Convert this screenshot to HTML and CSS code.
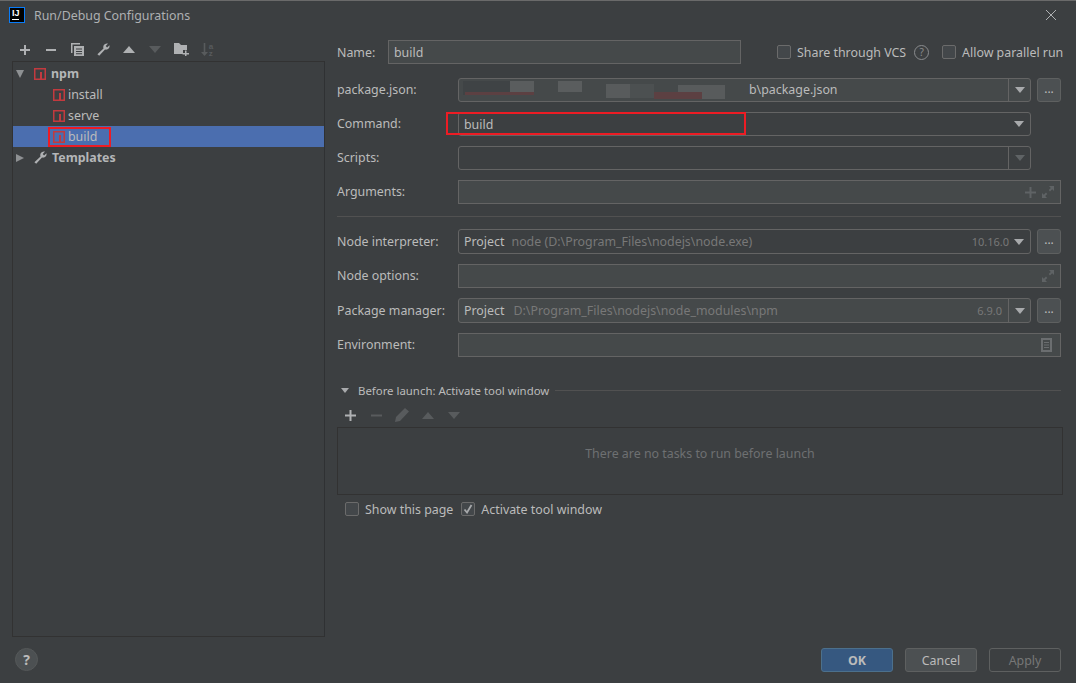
FILE: index.html
```html
<!DOCTYPE html>
<html lang="en">
<head>
<meta charset="utf-8">
<title>Run/Debug Configurations</title>
<link rel="stylesheet" href="styles.css">
</head>
<body>
<div class="dialog">
  <svg width="0" height="0" class="defs">
    <symbol id="npm" viewBox="0 0 12 12"><rect x=".75" y=".75" width="10.500" height="10.500" fill="none" stroke="#c23a3f" stroke-width="1.500"/><path d="M6 4H8V11.500H6z" fill="#c23a3f"/></symbol>
    <symbol id="wrench" viewBox="0 0 16 16"><path d="M1.500 13 8 6.800C7.200 4.200 8.800 1.600 11.600 1.500L12.800 1.700 10.400 4.200 11.800 5.800 14.400 3.400C15 6.200 12.400 8.800 9.600 8L3.400 14.600Z" fill="#afb1b3"/></symbol>
    <symbol id="expand" viewBox="0 0 14 14"><path d="M8 1H13V6L11.200 4.300 9 6.400 7.700 5.100 9.800 2.900ZM6 13H1V8L2.800 9.700 5 7.600 6.300 8.900 4.200 11.100Z" fill="#5f6365"/></symbol>
  </svg>

  <header class="titlebar">
    <span class="app-icon"><span class="app-letters">IJ</span><span class="app-bar"></span></span>
    <span class="title">Run/Debug Configurations</span>
    <svg class="close" width="12" height="12" viewBox="0 0 12 12"><path d="M1 1 11 11M11 1 1 11" stroke="#afb1b3" fill="none"/></svg>
  </header>

  <div class="main">
    <aside class="side">
      <div class="side-tools">
        <svg width="12" height="12" viewBox="0 0 12 12"><path d="M5 1h2v4h4v2H7v4H5V7H1V5h4z" fill="#afb1b3"/></svg>
        <svg width="12" height="12" viewBox="0 0 12 12"><path d="M1 5h10v2H1z" fill="#afb1b3"/></svg>
        <svg width="13" height="13" viewBox="0 0 13 13"><path d="M0 0h9v1.500H1.500V10H0z" fill="#afb1b3"/><path d="M3 3h10v10H3z" fill="#afb1b3"/><path d="M5 5.500h6v1H5zM5 8h6v1H5zM5 10.300h6v1H5z" fill="#3c3f41"/></svg>
        <svg width="15" height="15"><use href="#wrench"/></svg>
        <svg width="12" height="7" viewBox="0 0 12 7"><path d="M6 0 12 7H0z" fill="#afb1b3"/></svg>
        <svg width="12" height="7" viewBox="0 0 12 7"><path d="M0 0H12L6 7z" fill="#585b5d"/></svg>
        <svg width="15" height="13" viewBox="0 0 15 13"><path d="M0 0h5l2 2h6v5H9v4H0z" fill="#afb1b3"/><path d="M11 7.500h1.500v2.500H15v1.500h-2.500V14H11v-2.500H8.500V10H11z" fill="#afb1b3"/></svg>
        <span class="t-sort"><svg width="7" height="13" viewBox="0 0 7 13"><path d="M2.700 0h1.600v9H7l-3.500 4L0 9h2.700z" fill="#585b5d"/></svg><span class="sort-letters">a<br>z</span></span>
      </div>
      <div class="tree">
        <div class="node">
          <span class="arrow-down"></span>
          <svg class="ico" width="12" height="12"><use href="#npm"/></svg>
          <b class="node-bold">npm</b>
        </div>
        <div class="node child"><svg class="ico" width="12" height="12"><use href="#npm"/></svg><span>install</span></div>
        <div class="node child"><svg class="ico" width="12" height="12"><use href="#npm"/></svg><span>serve</span></div>
        <div class="node child selected"><svg class="ico" width="12" height="12"><use href="#npm"/></svg><span>build</span><span class="mark mark-tree"></span></div>
        <div class="node">
          <span class="arrow-right"></span>
          <svg class="ico-w" width="15" height="15"><use href="#wrench"/></svg>
          <b class="node-bold">Templates</b>
        </div>
      </div>
    </aside>

    <section class="form">
      <div class="name-row">
        <label class="name-label">Name:</label>
        <div class="field filled name-field">build</div>
        <span class="check share"></span><span class="opt">Share through VCS</span>
        <span class="help-small">?</span>
        <span class="check parallel"></span><span class="opt">Allow parallel run</span>
      </div>

      <div class="row first">
        <label>package.json:</label>
        <div class="with-btn">
          <div class="field filled round combo">
            <span class="blur">
              <i class="b b1"></i><i class="b b2"></i><i class="b b3"></i><i class="b b4"></i><i class="b b5"></i><i class="b b6"></i><i class="b b7"></i><i class="b b8"></i>
            </span>
            <span class="pkg-path">b\package.json</span>
            <span class="drop sep"><i class="tri"></i></span>
          </div>
          <button class="dots">...</button>
        </div>
      </div>

      <div class="row">
        <label>Command:</label>
        <div class="with-btn">
          <div class="field round combo cmd">
            <span class="val">build</span>
            <span class="drop"><i class="tri"></i></span>
            <span class="mark mark-cmd"></span>
          </div>
          <span class="btn-space"></span>
        </div>
      </div>

      <div class="row">
        <label>Scripts:</label>
        <div class="with-btn">
          <div class="field round combo">
            <span class="val"></span>
            <span class="drop sep"><i class="tri dim"></i></span>
          </div>
          <span class="btn-space"></span>
        </div>
      </div>

      <div class="row">
        <label>Arguments:</label>
        <div class="field filled end">
          <svg class="plus-dim" width="11" height="11" viewBox="0 0 11 11"><path d="M4.500 0h2v4.500H11v2H6.500V11h-2V6.500H0v-2h4.500z" fill="#5f6365"/></svg>
          <svg width="14" height="14"><use href="#expand"/></svg>
        </div>
      </div>

      <hr class="rule">

      <div class="row tall">
        <label>Node interpreter:</label>
        <div class="with-btn">
          <div class="field round combo">
            <span class="val strong">Project</span><span class="path p1">node (D:\Program_Files\nodejs\node.exe)</span>
            <span class="ver v1">10.16.0</span>
            <span class="drop"><i class="tri"></i></span>
          </div>
          <button class="dots">...</button>
        </div>
      </div>

      <div class="row">
        <label>Node options:</label>
        <div class="field filled end">
          <svg width="14" height="14"><use href="#expand"/></svg>
        </div>
      </div>

      <div class="row tall">
        <label>Package manager:</label>
        <div class="with-btn">
          <div class="field filled round combo">
            <span class="val strong">Project</span><span class="path p2">D:\Program_Files\nodejs\node_modules\npm</span>
            <span class="ver v2">6.9.0</span>
            <span class="drop sep"><i class="tri"></i></span>
          </div>
          <button class="dots">...</button>
        </div>
      </div>

      <div class="row">
        <label>Environment:</label>
        <div class="field filled end">
          <svg class="doc" width="11" height="14" viewBox="0 0 11 14"><path d="M0 0h11v14H0z" fill="#6b6e70"/><path d="M2 2h7v10H2z" fill="#45494a"/><path d="M3 4h5v1H3zM3 6.500h5v1H3zM3 9h5v1H3z" fill="#6b6e70"/></svg>
        </div>
      </div>

      <div class="before">
        <i class="tri before-tri"></i>
        <span class="before-title">Before launch: Activate tool window</span>
        <span class="before-line"></span>
      </div>
      <div class="before-tools">
        <svg width="11" height="11" viewBox="0 0 11 11"><path d="M4.500 0h2v4.500H11v2H6.500V11h-2V6.500H0v-2h4.500z" fill="#afb1b3"/></svg>
        <svg width="11" height="11" viewBox="0 0 11 11"><path d="M0 4.500h11v2H0z" fill="#585b5d"/></svg>
        <svg width="15" height="14" viewBox="0 0 15 14"><path d="M10 0 14 3.500 5 13 0 14 1 9z" fill="#585b5d"/></svg>
        <svg width="12" height="7" viewBox="0 0 12 7"><path d="M6 0 12 7H0z" fill="#585b5d"/></svg>
        <svg width="12" height="7" viewBox="0 0 12 7"><path d="M0 0H12L6 7z" fill="#585b5d"/></svg>
      </div>
      <div class="tasks">There are no tasks to run before launch</div>
      <div class="task-opts">
        <span class="check"></span><span class="opt">Show this page</span>
        <span class="check checked"><svg width="10" height="10" viewBox="0 0 10 10"><path d="M1.500 5.500 4 8.500 8.500 1" fill="none" stroke="#a7a9ab" stroke-width="1.800"/></svg></span><span class="opt">Activate tool window</span>
      </div>
    </section>
  </div>

  <footer class="footer">
    <span class="help">?</span>
    <div class="actions">
      <button class="btn ok">OK</button>
      <button class="btn">Cancel</button>
      <button class="btn off">Apply</button>
    </div>
  </footer>
</div>
</body>
</html>
```

FILE: styles.css
```css
* { box-sizing: border-box; }
html, body { margin: 0; height: 100%; }
body {
  background: #3c3f41;
  color: #bbbbbb;
  font: 12.4px "Noto Sans", "Open Sans", sans-serif;
  overflow: hidden;
}
.defs { position: absolute; }
.dialog { height: 683px; display: flex; flex-direction: column; border-top: 1px solid #6a6a6a; }

.titlebar { height: 30px; flex: none; display: flex; align-items: center; padding: 0 19px 2px 9px; }
.app-icon { width: 16px; height: 16px; background: #000; border: 1px solid #087cfa; position: relative; margin-right: 9px; }
.app-letters { position: absolute; left: 2px; top: 0; color: #fff; font: bold 9px/11px "Liberation Sans", sans-serif; }
.app-bar { position: absolute; left: 2px; bottom: 2px; width: 7px; height: 1px; background: #fff; }
.title { flex: 1; color: #aeb0b2; }

.main { flex: 1; display: flex; padding: 9px 13px 0 12px; min-height: 0; }
.side { width: 313px; flex: none; display: flex; flex-direction: column; }
.side-tools { height: 21px; padding-bottom: 2px; display: grid; grid-template-columns: repeat(8, 26px); align-items: center; justify-items: center; }
.t-sort { display: flex; align-items: center; gap: 1px; }
.sort-letters { color: #585b5d; font: bold 8px/7px "Liberation Sans", sans-serif; }

.tree { height: 576px; border: 1px solid #323232; border-right-color: #2f3133; padding-top: 1px; }
.node { height: 21px; display: flex; align-items: center; padding-left: 3px; position: relative; }
.node > .mark { position: absolute; top: 1px; }
.node-bold { font-weight: 700; color: #b4b6b8; }
.arrow-down { width: 0; height: 0; border-left: 4.5px solid transparent; border-right: 4.5px solid transparent; border-top: 8px solid #8e9193; margin-right: 10px; }
.arrow-right { width: 0; height: 0; border-top: 4.500px solid transparent; border-bottom: 4.500px solid transparent; border-left: 8px solid #8e9193; margin-right: 9px; }
.ico { margin-right: 5px; }
.ico-w { margin-right: 4px; }
.node.child { padding-left: 40px; }
.node.child .ico { margin-right: 3px; }
.node.selected { background: #4b6eaf; }
.mark { position: absolute; border: 2px solid #ed1c24; pointer-events: none; }
.mark-tree { left: 35px; width: 63px; height: 20px; }

.form { flex: 1; margin-left: 12px; min-width: 0; }
.name-row { display: flex; align-items: center; height: 24px; }
.name-label { width: 51px; flex: none; }
.field { height: 24px; border: 1px solid #646464; display: flex; align-items: center; position: relative; }
.filled { background: #45494a; }
.round { border-radius: 3px; }
.name-field { width: 353px; flex: none; padding-left: 5px; margin-right: 36px; }
.check { width: 14px; height: 14px; border: 1px solid #6b6b6b; border-radius: 2px; background: #43474a; flex: none; margin-right: 6px; display: inline-flex; align-items: center; justify-content: center; }
.parallel { margin-left: 13px; }
.opt { white-space: nowrap; }
.help-small { width: 15px; height: 15px; flex: none; margin-left: 8px; border: 1px solid #8a8c8e; border-radius: 50%; color: #8a8c8e; font: 10px/13px "Noto Sans", sans-serif; text-align: center; }

.row { display: flex; align-items: center; height: 24px; margin-top: 10px; }
.row.first { margin-top: 14px; }
.row.tall { height: 25px; }
.row.tall .field, .row.tall .dots { height: 25px; }
.row > label { width: 121px; flex: none; padding-bottom: 2px; }
.row.tall > label { padding-bottom: 0; }
.row > .field { width: 603px; }
.with-btn { display: flex; width: 603px; gap: 6px; }
.with-btn .combo { width: 573px; flex: none; }
.btn-space { width: 24px; }
.dots { width: 24px; height: 24px; padding: 0 0 4px; border: 1px solid #5e6060; border-radius: 3px; background: #4c5052; color: #bbb; font: 12px "Noto Sans", sans-serif; }
.combo { padding-left: 5px; padding-bottom: 1px; }
.combo.cmd { padding-bottom: 0; }
.val { white-space: nowrap; }
.strong { color: #bbb; }
.path { color: #787878; white-space: nowrap; }
.p1 { margin-left: 7px; }
.p2 { margin-left: 9px; }
.ver { position: absolute; color: #787878; font-size: 11px; }
.v1 { right: 21px; }
.v2 { right: 28px; }
.drop { position: absolute; right: 0; top: 0; bottom: 0; width: 22px; display: flex; align-items: center; justify-content: center; }
.drop.sep { border-left: 1px solid #646464; }
.tri { display: block; width: 0; height: 0; border-left: 5px solid transparent; border-right: 5px solid transparent; border-top: 6px solid #a8aaac; }
.tri.dim { border-top-color: #5f6365; }
.pkg-path { position: absolute; left: 290px; white-space: nowrap; }
.blur { position: absolute; inset: 0; }
.b { position: absolute; display: block; }
.b1 { left: 4px; top: 2px; width: 47px; height: 14px; background: #3f4345; }
.b2 { left: 51px; top: 2px; width: 24px; height: 11px; background: #5a5d5e; }
.b3 { left: 6px; top: 13px; width: 69px; height: 3px; background: #5c4042; }
.b4 { left: 99px; top: 2px; width: 24px; height: 11px; background: #5a5d5e; }
.b5 { left: 147px; top: 5px; width: 24px; height: 14px; background: #585b5c; }
.b6 { left: 171px; top: 5px; width: 24px; height: 14px; background: #4c5051; }
.b7 { left: 219px; top: 6px; width: 47px; height: 14px; background: #585b5c; }
.b8 { left: 195px; top: 13px; width: 48px; height: 7px; background: #5c4042; }
.mark-cmd { left: -13px; top: -1px; width: 300px; height: 23px; }
.end { justify-content: flex-end; padding-right: 5px; gap: 5px; }
.doc { margin-right: 3px; }

.rule { border: 0; height: 1px; background: #515151; margin: 12px 2px 12px 0; }

.before { display: flex; align-items: center; height: 16px; margin-top: 25px; padding-left: 4px; font-size: 11.4px; }
.before-tri { border-left-width: 4.500px; border-right-width: 4.500px; border-top-width: 5px; }
.before-title { margin-left: 9px; white-space: nowrap; }
.before-line { flex: 1; height: 1px; background: #515151; margin-left: 6px; margin-right: 2px; }
.before-tools { height: 20px; margin-top: 7px; display: grid; grid-template-columns: repeat(5, 26px); align-items: center; justify-items: center; }
.tasks { height: 68px; margin-top: 2px; padding-bottom: 16px; border: 1px solid #323232; display: flex; align-items: center; justify-content: center; color: #6e7072; }
.task-opts { display: flex; align-items: center; height: 20px; margin-top: 4px; padding-left: 8px; }
.task-opts .opt { margin-right: 8px; }

.footer { height: 46px; flex: none; display: flex; align-items: flex-start; justify-content: space-between; padding: 11px 15px 0 15px; }
.help { width: 23px; height: 23px; border-radius: 50%; background: #4c5052; border: 1px solid #555859; color: #bbb; font: bold 14px/21px "Noto Sans", sans-serif; text-align: center; }
.actions { display: flex; gap: 12px; }
.btn { width: 72px; height: 24px; padding: 0; border: 1px solid #5e6060; border-radius: 3px; background: #4c5052; color: #bbb; font: 12.4px "Noto Sans", sans-serif; }
.btn.ok { background: #365880; border-color: #4c708c; font-weight: 700; }
.btn.off { background: transparent; color: #777; }
```
